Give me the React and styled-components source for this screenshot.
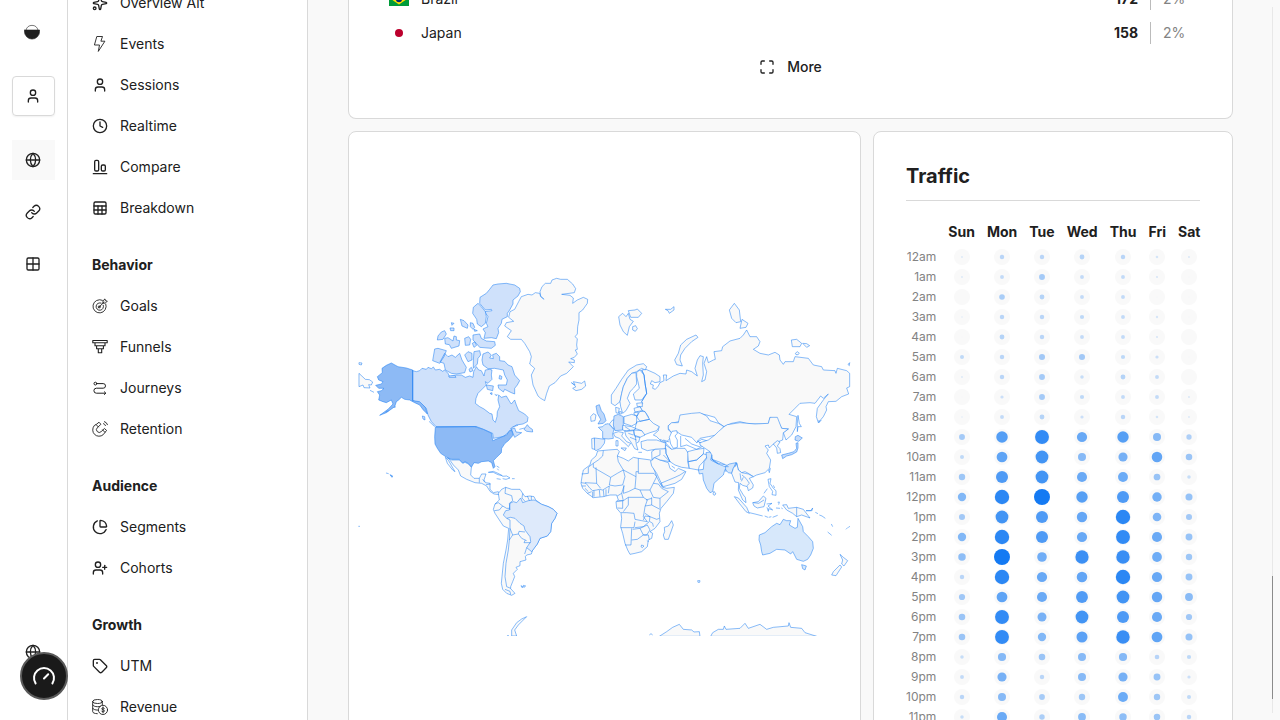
import React from 'react'
import styled, { createGlobalStyle } from 'styled-components'
import {
  Sparkles, User, Clock, AlignEndHorizontal, Sheet, ChartPie, UserPlus, Tag,
  Globe, Link, Grid2x2, Maximize,
} from 'lucide-react'


// ICONS

const LineIcon = ({ children, size = 16, width = 1 }) => (
  <svg width={size} height={size} viewBox='0 0 16 16' fill='none' stroke='currentColor' strokeWidth={width} strokeLinejoin='round' strokeLinecap='round' aria-hidden='true'>
    {children}
  </svg>
)

const Logo = () => (
  <LineIcon width={0.6}>
    <path d='M2 6a6.2 6.2 0 0 1 12 0' />
    <path d='M.4 6h15.2v1.5a7.6 7.6 0 0 1-15.2 0z' fill='currentColor' />
  </LineIcon>
)

const Bolt = () => (
  <LineIcon width={0.9}>
    <path d='M5.2 .5h5.3L8.9 5.2h4L6.3 15.4 7.5 9H2.8z' />
  </LineIcon>
)

const Target = () => (
  <LineIcon width={0.9}>
    <path d='M10.4 2.3A6.6 6.6 0 1 0 13.8 6' />
    <path d='M9.2 5.1a3.7 3.7 0 1 0 2.1 2.2' />
    <path d='M6.6 9.5 12 4.2M11 5V2.8L13 .9l.4 1.8 1.9.4-2 2H11' />
    <circle cx='7.2' cy='8.9' r='1' />
  </LineIcon>
)

const Funnel = () => (
  <LineIcon width={1.1}>
    <path d='M.8 1.5h14.4v2.3H.8zM3 3.8h10v3H3zM4.6 6.8h6.8v3H4.6zM6.3 9.8h3.4v4H6.3z' />
  </LineIcon>
)

const Path = () => (
  <LineIcon>
    <circle cx='3.4' cy='3.6' r='1.4' />
    <path d='M4.9 3.6h6.3a2.3 2.3 0 0 1 0 4.6H4.4a2.5 2.5 0 0 0 0 5h9.2M12.4 11.8l1.4 1.4-1.4 1.3' />
  </LineIcon>
)

const Magnet = () => (
  <LineIcon width={0.9}>
    <path d='M5.1 2.8 7 1.2l1.9 2.1-3.6 3.4a2.7 2.7 0 0 0 3.9 3.9L12.4 7.5l2.2 1.9-3.4 4.3A6.4 6.4 0 0 1 2 4.9z' />
    <path d='M4.2 3.7 6.4 6M10.6 8.9l2.2 2.3M11.5 2.6a3 3 0 0 1 2 2M12.4.6a4.5 4.5 0 0 1 3.1 3.1' />
  </LineIcon>
)

const Coins = () => (
  <LineIcon width={0.9}>
    <ellipse cx='5.5' cy='2.5' rx='4.8' ry='2' />
    <path d='M.7 2.5v10.2c0 1.1 1.9 1.9 4.6 2M10.3 2.5v3.2M.7 5.9c.4 1.1 2.4 1.8 4.9 1.8 1 0 1.9-.1 2.6-.3M.7 9.3c.4 1 2.3 1.8 5 1.8' />
    <circle cx='11' cy='10.9' r='4.6' />
    <path d='M12.4 9.4c-.5-.7-2.7-.8-2.7.4s2.8.9 2.8 2.1-2.3 1.2-2.9.3M11 8v5.8' />
  </LineIcon>
)

const Speed = () => (
  <svg width='24' height='24' viewBox='0 0 24 24' fill='none' stroke='#fff' strokeWidth='2' strokeLinecap='round' aria-hidden='true'>
    <path d='M3.6 19.4A10 10 0 1 1 20.4 19.4M12 14.5l4.2-4.2' />
  </svg>
)

const BrazilFlag = () => (
  <svg width='20' height='14' viewBox='0 0 20 14' aria-hidden='true'>
    <path fill='#009b3a' d='M0 0h20v14H0z' />
    <path fill='#fedf00' d='M10 1.4 18 7l-8 5.6L2 7z' />
    <circle cx='10' cy='7' r='3.2' fill='#002776' />
  </svg>
)

const JapanFlag = () => (
  <svg width='20' height='14' viewBox='0 0 20 14' aria-hidden='true'>
    <path fill='#fff' d='M0 0h20v14H0z' />
    <circle cx='10' cy='7' r='4' fill='#bc002d' />
  </svg>
)


// DATA

const navSections = [
  {
    items: [
      ['Overview Alt', Sparkles],
      ['Events', Bolt],
      ['Sessions', User],
      ['Realtime', Clock],
      ['Compare', AlignEndHorizontal],
      ['Breakdown', Sheet],
    ],
  },
  {
    title: 'Behavior',
    items: [
      ['Goals', Target],
      ['Funnels', Funnel],
      ['Journeys', Path],
      ['Retention', Magnet],
    ],
  },
  {
    title: 'Audience',
    items: [
      ['Segments', ChartPie],
      ['Cohorts', UserPlus],
    ],
  },
  {
    title: 'Growth',
    items: [
      ['UTM', Tag],
      ['Revenue', Coins],
    ],
  },
]

const countries = [
  { name: 'Brazil', count: 172, percent: 2, Flag: BrazilFlag },
  { name: 'Japan', count: 158, percent: 2, Flag: JapanFlag },
]

const days = ['Sun', 'Mon', 'Tue', 'Wed', 'Thu', 'Fri', 'Sat']

// percent of the busiest hour, Sunday to Saturday
const traffic = [
  ['12am', 12, 28, 28, 30, 28, 16, 13],
  ['1am', 12, 24, 37, 24, 24, 14, 6],
  ['2am', 4, 35, 30, 24, 24, 6, 6],
  ['3am', 10, 28, 28, 26, 24, 15, 6],
  ['4am', 5, 30, 28, 24, 24, 14, 2],
  ['5am', 25, 28, 38, 38, 26, 20, 6],
  ['6am', 12, 28, 37, 22, 30, 24, 3],
  ['7am', 5, 20, 37, 26, 24, 24, 13],
  ['8am', 10, 24, 30, 20, 28, 16, 12],
  ['9am', 37, 72, 87, 64, 71, 50, 33],
  ['10am', 25, 67, 80, 50, 57, 66, 41],
  ['11am', 40, 75, 80, 63, 62, 42, 22],
  ['12pm', 52, 90, 100, 71, 75, 59, 44],
  ['1pm', 38, 80, 75, 65, 90, 54, 38],
  ['2pm', 52, 90, 75, 64, 87, 63, 43],
  ['3pm', 47, 100, 60, 83, 84, 61, 40],
  ['4pm', 28, 90, 64, 66, 90, 64, 43],
  ['5pm', 39, 67, 63, 74, 80, 65, 49],
  ['6pm', 41, 87, 56, 80, 75, 63, 39],
  ['7pm', 41, 87, 52, 69, 84, 67, 44],
  ['8pm', 22, 51, 41, 50, 51, 29, 26],
  ['9pm', 24, 57, 28, 50, 57, 43, 20],
  ['10pm', 28, 50, 36, 40, 62, 40, 25],
  ['11pm', 22, 63, 34, 49, 47, 41, 28],
]


// MAP
// Every sheet has its own origin and is drawn at three times its final size.

const LAND = '#f9f9f9'
const CANADA = '#cfe1fb'
const USA = '#8dbaf5'

const sheets = [
  {
    x: 348,
    y: 260,
    shapes: [
      // Canada
      [CANADA, 'M194 332 205 335 215 332 222 325 235 328 240 322 250 326 256 321 262 330 275 328 284 334 290 330 300 340 305 350 325 345 340 345 352 352 365 348 375 352 377 335 385 320 392 330 400 332 408 348 412 330 425 328 432 330 430 345 432 358 420 370 412 365 415 375 405 385 390 400 384 415 382 430 395 440 408 447 425 460 432 462 435 480 442 487 447 470 448 455 455 440 450 420 452 405 460 412 475 408 485 425 490 432 500 420 505 435 512 452 530 462 540 472 538 485 525 492 505 495 491 505 491 510 465 530 436 535 434 520 406 508 386 500 264 500 250 485 240 465 235 445 215 428 194 422Z'],
      [CANADA, 'M435 75 450 72 475 70 500 75 515 85 517 95 510 108 495 120 495 132 485 150 478 160 478 170 462 178 460 190 450 205 452 218 445 236 430 233 408 235 412 218 405 207 420 200 415 190 420 170 410 155 432 152 430 148 412 150 395 130 396 112 415 100 425 88Z'],
      [CANADA, 'M390 130 400 140 412 155 415 170 412 190 400 200 388 192 386 178 374 160 376 142Z'],
      [CANADA, 'M337 178 348 182 360 195 358 205 342 198ZM367 188 375 190 380 202 375 208 367 200ZM290 212 295 222 285 238 268 240 270 228 280 216ZM290 235 300 233 315 243 318 228 325 230 325 240 335 242 333 258 310 265 304 254 292 252Z'],
      [CANADA, 'M350 235 362 230 368 238 365 255 352 256ZM375 225 395 222 400 235 415 243 440 245 442 256 430 265 395 262 385 250 375 240ZM373 250 380 246 386 256 378 262ZM378 208 388 212 380 214Z'],
      [CANADA, 'M260 267 270 265 295 272 288 290 275 310 254 302ZM290 280 300 290 312 285 322 292 335 280 342 300 355 322 350 338 325 342 310 340 292 330 288 310 276 306ZM350 285 360 275 372 280 372 300 360 305ZM378 275 395 272 398 285 390 295 388 312 376 325 376 300ZM363 328 370 322 375 332 366 336ZM302 348 320 346 324 352 304 352Z'],
      [CANADA, 'M402 300 405 282 420 276 430 285 425 294 436 296 434 284 445 280 455 290 455 302 470 304 480 315 492 320 500 345 515 362 508 375 500 385 500 402 490 398 470 388 466 396 452 385 450 375 475 375 478 360 470 345 466 330 440 325 420 326 405 315Z'],
      [CANADA, 'M415 375 436 378 434 392 418 388ZM426 400 432 398 432 404ZM440 403 446 407 448 403M455 346 462 350 460 358 453 356ZM310 188 318 190 312 196ZM306 204 318 204 318 212 308 212ZM223 468 230 470 231 480 225 477ZM243 484 260 500M486 508 495 500 510 496M514 508 530 504'],
      // Alaska
      [USA, 'M194 330 175 324 150 320 130 309 115 316 102 325 103 338 88 350 92 360 105 365 100 372 83 376 92 385 108 385 100 392 88 395 95 405 92 420 105 425 115 428 130 420 135 432 120 448 95 466 115 458 140 440 145 425 152 420 160 412 170 418 185 420 200 428 215 435 226 450 238 462 232 442 215 425 194 422Z'],
      [USA, 'M138 443 144 440M66 391 78 397M113 456 122 452'],
      [LAND, 'M33 340 52 358 64 359 74 366 70 375 62 374 66 384 48 383 45 375 33 380ZM33 308 42 309 40 315 33 313Z'],
    ],
    borders: 'M194 330V422M264 501H386',
  },
  {
    x: 340,
    y: 400,
    shapes: [
      // Canada, Atlantic side
      [CANADA, 'M514 88 524 84 528 96 545 98 524 112 520 102ZM552 88 562 74 568 82 577 88 578 96 560 94Z'],
      [USA, 'M286 82 404 80 430 88 455 100 458 122 475 115 500 105 508 92 516 92 519 106 505 122 495 130 485 145 484 158 470 172 460 182 465 200 460 205 455 188 445 183 425 185 415 190 402 188 394 202 385 190 375 185 368 190 358 178 335 178 320 172 302 160 292 145 285 132 284 110Z'],
      [USA, 'M138 219 146 221M150 224 158 228 156 232Z'],
      // Mexico and Central America
      [LAND, 'M322 174 335 180 358 180 368 190 375 187 385 192 394 202 392 225 402 235 418 235 425 222 438 222 432 240 436 248 450 250 450 268 460 278 475 275 478 284 462 282 450 274 440 258 425 250 405 248 380 238 362 228 355 210 340 195 328 178Z'],
      [LAND, 'M316 172 326 182 335 198 345 215 338 210 322 190Z'],
      ['none', 'M445 217 460 214 474 220 487 227 474 224 460 217ZM487 229 500 228 510 234 498 238 488 236M516 236H524M470 236 482 238M470 198 478 203M472 206 476 211M55 379H60'],
      // South America
      [LAND, 'M475 280 485 268 497 262 515 268 540 268 548 280 555 290 570 288 582 290 587 300 605 313 625 320 640 328 651 340 645 355 635 370 632 395 622 408 600 415 592 432 578 450 574 462 560 465 556 470 558 480 540 485 540 497 528 502 532 508 520 520 524 530 518 545 512 560 512 566 525 580 515 586 500 580 488 568 484 550 486 530 490 490 498 450 503 420 506 385 490 378 478 360 465 340 460 328 465 312 478 300Z'],
      ['#deeafb', 'M510 310 520 305 530 308 542 294 548 308 565 302 582 300 587 302 605 313 625 320 640 328 651 340 645 355 635 370 632 395 622 408 600 415 592 432 575 455 560 443 572 425 570 410 555 390 552 378 540 370 525 355 512 352 500 355 490 345 497 332 508 330Z'],
      ['none', 'M543 557 550 561 546 563ZM550 556 557 558 552 562Z'],
      [LAND, 'M515 708 515 690 530 668 545 657 560 650 548 662 535 675 524 690 530 708ZM501 707H507'],
    ],
    borders: 'M418 235 418 248M428 238 434 246M438 254 452 252M497 262 495 280 515 287 518 302 508 310 510 330M465 312 475 308 488 318 478 330 463 332M488 318 500 325 508 325M500 355 510 360 510 385 518 405 535 402 545 415 560 422M535 402 537 394 555 396M552 428 572 428M552 428 556 420M510 385 508 420 505 450 498 490 495 530 500 560 512 565M560 443 554 462M548 280 546 294 555 304M562 288 568 302M574 288 574 300M518 405 508 420M495 568 510 574 512 584',
  },
  {
    x: 540,
    y: 260,
    shapes: [
      // Greenland
      [LAND, 'M12 118 2 108 0 95 6 80 16 70 32 70 36 60 50 55 62 58 82 58 98 72 107 86 103 98 65 103 90 106 100 114 98 130 112 120 130 112 143 118 142 130 128 150 117 158 117 180 113 200 112 222 105 230 112 236 110 255 112 268 106 270 112 282 103 292 92 296 103 300 103 308 86 306 100 320 80 340 62 348 45 368 28 378 20 400 14 422 2 415-6 408-21 375-26 345-16 325-31 312-26 290-31 275-46 250-56 238-88 238-98 230-86 212-106 198-101 188-79 184-94 172-90 155-76 148-64 125-56 110-36 103-24 105-14 98-1 100 2 110Z'],
      [LAND, 'M94 368 105 375 100 365 125 370 134 363 137 378 125 388 108 392 98 385 108 380Z'],
      [LAND, 'M236 170 248 160 258 170 265 160 270 178 280 184 268 200 262 226 250 215 240 195ZM265 152 285 150 292 147 305 160 295 172 272 172ZM278 200 287 197 292 206 286 214 278 210ZM376 148 392 148 402 140 402 150 388 160 384 152Z'],
      [LAND, 'M468 225 474 232 455 245 435 265 422 285 420 300 427 318 410 314 404 300 415 280 422 255 440 238ZM568 150 583 130 598 150 602 185 588 188 575 175ZM606 178 624 190 618 202 600 205ZM754 240 770 238 785 250 780 260 757 260ZM788 250 800 251 809 257 800 262ZM766 280 772 275 778 280 774 284 768 284ZM924 313 929 308 928 317Z'],
      // Russia
      [LAND, 'M318 328 345 340 360 350 360 365 345 368 335 362 331 372 340 375 338 385 346 388 355 378 360 368 372 362 370 345 380 345 378 362 400 348 420 340 438 342 440 330 455 335 472 348 465 325 472 300 480 287 490 290 488 310 490 345 485 365 495 360 500 335 492 310 500 290 505 308 520 300 526 298 522 275 545 272 548 260 570 243 600 235 610 225 620 210 630 230 650 230 660 245 655 258 640 268 660 280 685 285 705 277 718 285 720 300 730 313 735 305 760 305 765 290 805 295 820 315 845 320 850 330 885 332 888 340 892 325 920 332 929 340 929 380 920 384 926 402 905 410 888 424 865 425 858 440 860 450 850 470 835 488 829 470 832 445 850 420 865 402 850 415 842 408 825 430 810 428 780 430 765 445 747 463 770 470 768 500 755 525 738 540 730 518 745 507 725 505 712 480 690 472 685 492 645 492 620 490 600 485 575 490 552 500 535 488 525 472 500 465 478 460 450 465 440 478 415 485 395 490 385 497 385 510 400 520 390 535 378 548 365 545 350 530 340 525 355 512 357 500 330 490 325 470 315 455 305 450 300 440 308 430 305 425 320 400 315 370 312 345 305 330Z'],
      ['none', 'M774 466 778 490 784 500 774 500 772 515 772 490Z'],
      // Scandinavia
      [LAND, 'M214 405 228 385 245 358 265 330 290 315 310 311 320 320 316 330 305 325 290 335 275 340 262 355 250 380 245 400 240 425 225 437 214 430Z'],
      [LAND, 'M262 355 275 340 288 338 290 372 280 385 270 395 262 415 270 430 258 452 248 460 242 440 240 425 245 400 250 380Z'],
      [LAND, 'M290 337 300 330 312 345 315 370 320 400 305 420 285 420 280 402 298 385 295 370 290 350Z'],
    ],
    borders: 'M305 425 320 400 315 370 312 345 305 330M552 500 566 518 590 536 622 542 650 540 685 515 682 492',
  },
  {
    x: 560,
    y: 380,
    shapes: [
      // Europe
      ['#bdd7fa', 'M108 78 118 74 124 92 132 102 138 122 130 130 114 132 122 118 112 100Z'],
      [LAND, 'M92 110 100 101 108 105 105 122 93 124Z'],
      ['#d6e7fc', 'M115 142 128 140 135 133 145 131 162 148 158 162 160 175 145 177 128 175 128 155Z'],
      ['#e2edfc', 'M103 174 135 178 133 190 122 205 108 212 100 205Z'],
      [LAND, 'M95 176 103 174 104 208 96 206ZM148 132 158 120 164 120 162 148ZM167 82 178 85 175 100 168 98ZM178 95H184V102H178Z'],
      ['#cbdffa', 'M162 108 175 103 190 110 190 135 188 150 165 152 160 135Z'],
      [LAND, 'M192 110 215 103 230 108 230 130 215 138 192 130ZM230 70 247 68 247 80 232 80ZM222 85 240 80 247 92 225 96ZM222 98 235 96 232 108 222 104ZM240 94 255 95 268 118 240 124 230 110ZM230 126 268 118 280 130 298 140 290 152 270 158 252 165 245 152 225 145Z'],
      [LAND, 'M222 150 245 152 255 165 240 172 222 165ZM188 136 215 140 228 146 218 152 200 154 188 150ZM160 160 175 155 190 158 185 168 200 185 212 190 205 200 195 190 178 175 165 170ZM183 204 199 204 195 212ZM168 182 174 182 174 198 168 198ZM194 153 220 150 225 170 240 172 236 186 228 190 234 210 224 206 212 185 198 168Z'],
      [LAND, 'M243 185 262 180 290 180 318 190 315 208 285 208 262 212 245 205Z'],
      ['none', 'M235 217H246M278 213 286 211'],
      // Africa
      [LAND, 'M113 213 145 210 172 208 178 215 172 228 190 235 205 243 220 232 235 235 272 240 280 262 290 290 300 310 308 322 320 325 343 322 340 340 320 365 303 385 298 400 300 425 285 445 270 455 278 460 275 475 265 480 262 500 245 515 225 520 210 523 203 510 195 490 188 460 182 440 185 415 183 400 170 385 168 365 175 360 170 345 150 345 130 350 100 353 82 340 68 325 63 310 66 290 70 270 90 255 94 240 108 228Z'],
      [LAND, 'M335 422 340 435 325 478 314 478 310 465 314 455 313 442 325 438Z'],
      // Middle East and Central Asia
      [LAND, 'M272 245 285 232 300 240 325 248 330 265 345 275 355 265 378 275 365 298 345 310 310 320 305 312 290 280 275 258Z'],
      [LAND, 'M275 215 285 208 318 206 318 220 330 245 300 240 282 232 276 240ZM316 194 335 208 350 205 375 205 385 220 383 245 388 265 365 262 345 255 330 245 318 220Z'],
      [LAND, 'M383 215 410 208 432 205 430 222 410 240 385 245ZM388 265 385 245 410 240 430 222 445 225 430 245 418 258 415 270Z'],
      [LAND, 'M325 137 335 128 355 128 360 105 395 100 420 98 440 108 450 122 475 130 492 140 470 165 445 170 420 175 410 188 395 172 365 165 350 155 340 175 335 160 325 145Z'],
      ['#fff', 'M336 154 350 152 352 160 345 168 352 180 352 202 340 205 332 192 328 172Z'],
    ],
    borders: 'M130 212 128 228 115 240 100 250 100 262 152 292 172 280 190 270 175 245 172 228M100 250 85 262 85 280 65 282M108 262 110 310 75 308M235 235V280H282M190 270 228 290V275H235M152 292 148 315 165 318 188 315 195 290 190 270M228 290 225 325 205 335 190 340 192 315M148 318 145 340M192 318 185 340 172 348M282 280 290 290 280 310 270 330 240 330 225 325M240 330 250 352 205 352 190 362 175 362M270 330 280 352 300 355 325 335 305 325 295 312 280 310M275 352V375L300 388M300 355V385M250 352 262 360 255 380 252 400 250 410 262 425 245 422 225 418 222 400 200 398 183 398M205 352V375L190 395M255 378 275 375M255 400 270 410 290 418 298 415M225 425 222 443H182M250 420 255 408 270 410 268 425 250 440 225 443M215 445 213 495H195M218 448 240 445 250 465 232 478 215 480M240 445 262 435 270 450 260 465H250M270 425 278 430 280 440M250 465 265 465 268 480M63 308 78 310 90 325 98 332 110 330 118 328 128 330 148 318M65 318H78M98 353 98 335M102 332V350M120 350 118 330M132 350 130 330M138 348 138 328M110 310 122 325M75 325 85 335M82 340 95 335M170 365 188 362V385L172 384M185 340 190 362M245 495 252 498 247 503 243 500ZM262 482 266 486M258 360 275 355M308 322 302 310 345 292 360 285 375 275M335 258 345 265M300 210 300 225 285 232M310 225 330 245M362 168V200L380 195 410 208 430 198 412 182M375 175 395 192 418 200 436 188 418 188M410 188 425 178 440 182 425 192M318 190 335 208M310 180 328 186M300 178 318 186M195 140 210 150M205 160 220 165M210 172 230 180M226 168 228 188',
  },
  {
    x: 640,
    y: 420,
    shapes: [
      // China
      [LAND, 'M252 20 262 14 300 8 345 12 385 10 390-8 412-8 425 25 445 27 430 38 428 60 415 65 400 72 388 84 385 75 375 78 385 90 380 100 392 120 388 145 375 158 350 165 340 170 325 160 315 155 305 158 295 150 290 128 270 138 235 130 215 118 210 95 195 85 180 75 180 68 205 60 225 45 235 35Z'],
      ['#d6e7fb', 'M198 98 210 96 216 105 212 120 235 132 255 140 268 132 288 128 280 145 275 160 265 158 255 148 250 165 235 178 222 190 218 215 210 218 200 205 190 180 188 160 178 162 175 150 190 148 192 125 200 115Z'],
      [LAND, 'M222 214 228 222 222 226 219 222ZM400 72 412 62 420 66 412 78 420 86 422 98 412 100 410 84Z'],
      ['#c6dcfa', 'M425 105 445 100 462 95 470 85 468 70 474 68 474 84 470 96 455 104 440 108 428 116ZM466 50 474 46 487 54 476 64 465 60Z'],
      // South-east Asia
      [LAND, 'M275 160 280 145 290 130 295 150 305 158 325 162 340 170 328 175 340 195 338 204 325 212 322 200 308 196 300 190 298 205 310 225 316 232 318 248 308 240 295 210 296 188 285 186Z'],
      [LAND, 'M283 230 295 234 320 262 328 280 318 275 298 250ZM338 248 355 245 370 228 378 235 372 260 352 264 342 258Z'],
      ['none', 'M328 278 345 282 368 288M374 288 384 292M386 292 394 290M398 292 413 286M380 252 396 250 384 258 398 270 386 266 385 274 381 262M372 220 382 206M384 178 393 176 390 190 400 205 408 212 408 226 396 224 398 214 388 200ZM400 196 404 204M413 247 418 246 416 254M408 264 420 265M424 264 428 266M386 150 391 145 388 158Z'],
      [LAND, 'M428 255 440 254 445 265 470 262 490 268 510 294 485 285 470 290 458 280 440 270ZM498 272 512 272 518 264 516 272Z'],
      ['none', 'M526 277 534 281M538 285 546 288M546 288 556 295M574 312 578 320M563 336 575 346M618 328 624 322M625 322 630 319M537 0V8L544 0M173 482 180 482 179 487 174 487Z'],
      // Oceania
      ['#d7e8fb', 'M358 345 375 338 395 320 410 310 420 314 430 298 440 302 452 302 448 315 465 325 472 322 474 295 488 320 490 335 505 350 518 365 520 385 512 405 503 418 490 424 470 418 462 402 458 395 452 402 435 390 410 388 390 400 368 405 365 395 362 375 357 360ZM485 434 499 438 495 450 488 446Z'],
      [LAND, 'M600 403 610 412 623 422 612 438 605 432 608 420ZM600 435 605 441 588 467 575 465 580 455Z'],
      // Antarctica
      [LAND, 'M58 649 80 635 98 622 118 613 130 628 155 630 162 636 178 635 180 649ZM212 649 218 638 235 628 250 628 253 618 258 628 300 625 315 610 325 625 360 613 380 628 400 622 445 618 447 608 452 622 485 625 495 638 530 649ZM28 645 33 641 38 645'],
    ],
    borders: 'M216 118 238 126 256 134M256 140H266M256 140 258 156M215 105 218 120 235 132M300 160 303 180M306 165 318 175 328 190 320 198M310 172 304 184M340 248 356 250 372 240M470 262V290M290 130 286 140',
  },
]

const WorldMap = () => (
  <MapDrawing viewBox='358 255 493 381' role='img' aria-label='Visitors by country'>
    {sheets.map(sheet => (
      <g key={`${sheet.x}-${sheet.y}`} transform={`translate(${sheet.x} ${sheet.y}) scale(.33333)`}>
        {sheet.shapes.map(([fill, d]) => <path key={d} d={d} fill={fill} />)}
        <path d={sheet.borders} fill='none' />
      </g>
    ))}
  </MapDrawing>
)


function App() {
  return (
    <>
      <GlobalStyle />
      <Shell>
        <Rail>
          <LogoLink href='#home' aria-label='Home'><Logo /></LogoLink>
          <RailGroup>
            <RailButton $outlined aria-label='Account'><User size={16} /></RailButton>
          </RailGroup>
          <RailGroup>
            <RailButton $active aria-label='Websites'><Globe size={16} /></RailButton>
            <RailButton aria-label='Links'><Link size={16} /></RailButton>
            <RailButton aria-label='Boards'><Grid2x2 size={16} /></RailButton>
          </RailGroup>
          <RailFoot>
            <RailButton aria-label='Language'><Globe size={16} /></RailButton>
          </RailFoot>
        </Rail>

        <Sidebar>
          {navSections.map((section, i) => (
            <NavSection key={i}>
              {section.title && <NavTitle>{section.title}</NavTitle>}
              {section.items.map(([label, Icon]) => (
                <NavLink href='#nav' key={label}>
                  <Icon size={16} />
                  {label}
                </NavLink>
              ))}
            </NavSection>
          ))}
        </Sidebar>

        <Main>
          <Content>
            <CountryCard>
              {countries.map(({ name, count, percent, Flag }) => (
                <CountryRow key={name}>
                  <Flag />
                  <CountryName>{name}</CountryName>
                  <Count>{count}</Count>
                  <Percent>{percent}%</Percent>
                </CountryRow>
              ))}
              <MoreButton><Maximize size={16} />More</MoreButton>
            </CountryCard>

            <Panels>
              <MapCard>
                <WorldMap />
              </MapCard>

              <TrafficCard>
                <CardTitle>Traffic</CardTitle>
                <TrafficTable>
                  <thead>
                    <tr>
                      <td />
                      {days.map(day => <DayHead scope='col' key={day}>{day}</DayHead>)}
                    </tr>
                  </thead>
                  <tbody>
                    {traffic.map(([hour, ...values]) => (
                      <tr key={hour}>
                        <HourHead scope='row'>{hour}</HourHead>
                        {values.map((value, i) => (
                          <DotCell key={days[i]}>
                            <DotBack>
                              <Dot style={{ transform: `scale(${value / 100})`, opacity: value / 100 }} />
                            </DotBack>
                          </DotCell>
                        ))}
                      </tr>
                    ))}
                  </tbody>
                </TrafficTable>
              </TrafficCard>
            </Panels>
          </Content>
          <ScrollTrack><ScrollThumb /></ScrollTrack>
        </Main>

        <SpeedButton aria-label='Performance'><Speed /></SpeedButton>
      </Shell>
    </>
  )
}

const GlobalStyle = createGlobalStyle`
  * {
    box-sizing: border-box;
  }
  body {
    margin: 0;
    background: #f9f9f9;
    color: #202020;
    font-family: Inter, sans-serif;
    font-size: 14px;
    line-height: 20px;
  }
  button {
    font: inherit;
    color: inherit;
    border: 0;
    padding: 0;
    background: none;
    cursor: pointer;
  }
  a {
    color: inherit;
    text-decoration: none;
  }
  svg {
    flex-shrink: 0;
  }
`

const Shell = styled.div`
  display: flex;
  height: 100vh;
  overflow: hidden;
`

const Rail = styled.nav`
  display: flex;
  flex-direction: column;
  flex-shrink: 0;
  gap: 24px;
  width: 68px;
  padding: 24px 12px 48px;
  background: #fff;
  border-right: 1px solid #d9d9d9;
`

const LogoLink = styled.a`
  display: flex;
  height: 28px;
  padding-left: 12px;
`

const RailGroup = styled.div`
  display: flex;
  flex-direction: column;
  gap: 12px;
`

const RailFoot = styled(RailGroup)`
  margin-top: auto;
`

const RailButton = styled.button`
  display: flex;
  align-items: center;
  height: 40px;
  padding-left: ${props => props.$outlined ? '12px' : '13px'};
  border: ${props => props.$outlined ? '1px solid #d9d9d9' : '0'};
  border-radius: ${props => props.$outlined ? '4px' : '0'};
  box-shadow: ${props => props.$outlined ? '0 1px 2px rgba(0, 0, 0, .06)' : 'none'};
  background: ${props => props.$active ? '#f9f9f9' : 'transparent'};
`

const Sidebar = styled.nav`
  display: flex;
  flex-direction: column;
  flex-shrink: 0;
  gap: 37px;
  width: 240px;
  margin-top: -7px;
  padding: 0 24px;
  background: #fff;
  border-right: 1px solid #d9d9d9;
`

const NavSection = styled.div`
  display: flex;
  flex-direction: column;
  gap: 21px;
`

const NavTitle = styled.div`
  font-weight: 700;
`

const NavLink = styled.a`
  display: flex;
  align-items: center;
  gap: 12px;
`

const Main = styled.main`
  display: flex;
  flex: 1;
  min-width: 0;
`

const Content = styled.div`
  flex: 1;
  min-width: 0;
  padding: 0 39px 0 40px;
`

const Card = styled.section`
  background: #fff;
  border: 1px solid #d9d9d9;
  border-radius: 8px;
`

const CountryCard = styled(Card)`
  display: flex;
  flex-direction: column;
  gap: 12px;
  margin-top: -12px;
  padding: 0 32px 40px;
  border-top: 0;
`

const CountryRow = styled.div`
  display: flex;
  align-items: center;
  height: 22px;
  padding-left: 8px;
`

const CountryName = styled.span`
  flex: 1;
  padding-left: 12px;
`

const Count = styled.span`
  font-weight: 700;
  padding-right: 12px;
`

const Percent = styled.span`
  width: 50px;
  padding-left: 12px;
  line-height: 22px;
  color: #838383;
  border-left: 1px solid #bbb;
`

const MoreButton = styled.button`
  display: flex;
  align-items: center;
  align-self: center;
  gap: 12px;
  height: 22px;
  font-weight: 500;
`

const Panels = styled.div`
  display: grid;
  grid-template-columns: minmax(0, 1fr) 360px;
  gap: 12px;
  margin-top: 12px;
`

const MapCard = styled(Card)`
  display: flex;
  align-items: center;
  padding: 0 9px;
`

const MapDrawing = styled.svg`
  display: block;
  width: 100%;

  path {
    stroke: #147af3;
    stroke-opacity: .5;
    stroke-linejoin: round;
    vector-effect: non-scaling-stroke;
  }
`

const TrafficCard = styled(Card)`
  padding: 32px;
`

const CardTitle = styled.h2`
  margin: 0 0 16px;
  padding-bottom: 12px;
  font-size: 20px;
  line-height: 24px;
  font-weight: 700;
  border-bottom: 1px solid #d9d9d9;
`

const TrafficTable = styled.table`
  width: 100%;
  border-collapse: collapse;

  td, th {
    padding: 0;
  }
`

const DayHead = styled.th`
  && {
    height: 30px;
    padding-left: 12px;
  }
  font-weight: 700;
  text-align: center;
`

const HourHead = styled.th`
  height: 20px;
  font-size: 12px;
  font-weight: 400;
  color: #838383;
  text-align: right;
`

const DotCell = styled.td`
  && {
    padding-left: 12px;
  }
`

const DotBack = styled.div`
  width: 16px;
  height: 16px;
  margin: 0 auto;
  border-radius: 50%;
  background: #f9f9f9;
`

const Dot = styled.div`
  width: 16px;
  height: 16px;
  border-radius: 50%;
  background: #147af3;
`

const ScrollTrack = styled.div`
  display: flex;
  flex-direction: column;
  justify-content: flex-end;
  width: 1px;
  margin: 7px 7px 7px 0;
  padding-bottom: 14px;
  background: #e8e8e8;
`

const ScrollThumb = styled.div`
  height: 123px;
  background: #8b8b8b;
`

const SpeedButton = styled.button`
  position: fixed;
  left: 20px;
  bottom: 20px;
  display: flex;
  align-items: center;
  justify-content: center;
  width: 48px;
  height: 48px;
  border: 2px solid #5a5a5a;
  border-radius: 50%;
  background: #1a1a1a;
`

export default App
